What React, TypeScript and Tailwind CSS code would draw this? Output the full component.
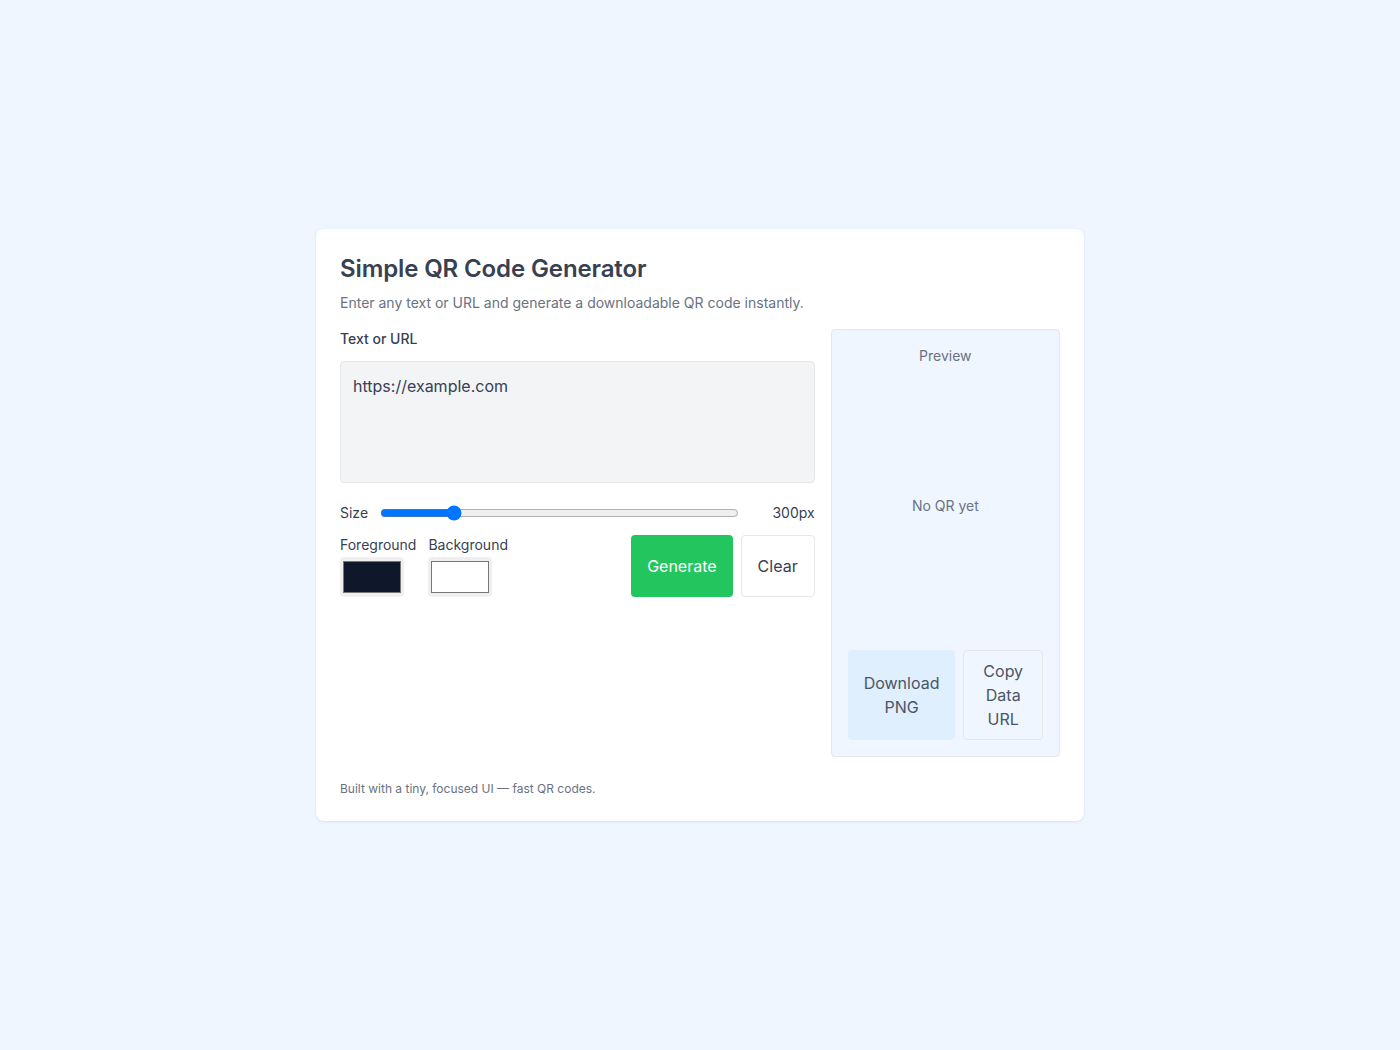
import { useState } from 'react';

export default function App() {
    const [text, setText] = useState('https://example.com');
    const [size, setSize] = useState(300);
    const [fg, setFg] = useState('#0f172a');
    const [bg, setBg] = useState('#ffffff');

    return (
        <div className="min-h-screen bg-[#eff6ff] flex items-center justify-center font-['Inter',sans-serif] text-gray-700">
            <div className="w-full max-w-3xl bg-white rounded-lg shadow-[0_1px_3px_rgba(30,64,120,0.12)] p-6">
                <h1 className="text-2xl font-semibold text-[#374151] tracking-[-0.005em]">Simple QR Code Generator</h1>
                <p className="mt-2 text-sm text-gray-500">Enter any text or URL and generate a downloadable QR code instantly.</p>

                <div className="mt-4 grid grid-cols-3 gap-4">
                    <div className="col-span-2">
                        <label className="block text-sm font-medium text-gray-700">Text or URL</label>
                        <textarea
                            rows={4}
                            value={text}
                            onChange={(e) => setText(e.target.value)}
                            className="mt-3 block w-full resize-none rounded border border-gray-200 bg-gray-100 p-3 text-base text-gray-700 focus:outline-none"
                        />

                        <div className="mt-5 flex items-center gap-3">
                            <span className="text-sm text-gray-700">Size</span>
                            <input
                                type="range"
                                min={128}
                                max={1024}
                                value={size}
                                onChange={(e) => setSize(Number(e.target.value))}
                                className="flex-1"
                            />
                            <span className="w-16 text-right text-sm text-gray-700">{size}px</span>
                        </div>

                        <div className="mt-3 flex items-stretch justify-between">
                            <div className="flex gap-3">
                                <label className="block text-sm text-gray-700">
                                    Foreground
                                    <input
                                        type="color"
                                        value={fg}
                                        onChange={(e) => setFg(e.target.value)}
                                        className="mt-0.5 block h-10 w-16 rounded bg-[#efefef] px-[1px]"
                                    />
                                </label>
                                <label className="block text-sm text-gray-700">
                                    Background
                                    <input
                                        type="color"
                                        value={bg}
                                        onChange={(e) => setBg(e.target.value)}
                                        className="mt-0.5 block h-10 w-16 rounded bg-[#efefef] px-[1px]"
                                    />
                                </label>
                            </div>
                            <div className="flex gap-2">
                                <button className="rounded bg-[#22c55e] px-4 text-base text-white">Generate</button>
                                <button className="rounded border border-gray-200 bg-white px-4 text-base text-gray-700">Clear</button>
                            </div>
                        </div>
                    </div>

                    <div className="rounded border border-gray-200 bg-[#eff6ff] p-4">
                        <div className="text-center text-sm text-gray-500">Preview</div>
                        <div className="mt-3 flex h-64 items-center justify-center text-sm text-gray-500">No QR yet</div>
                        <div className="mt-4 flex gap-2">
                            <button className="rounded bg-[#e0effe] px-4 py-2 text-base text-gray-600">Download PNG</button>
                            <button className="rounded border border-gray-200 px-4 py-2 text-base text-gray-600">Copy Data URL</button>
                        </div>
                    </div>
                </div>

                <p className="mt-6 text-xs text-gray-500">Built with a tiny, focused UI — fast QR codes.</p>
            </div>
        </div>
    );
}
